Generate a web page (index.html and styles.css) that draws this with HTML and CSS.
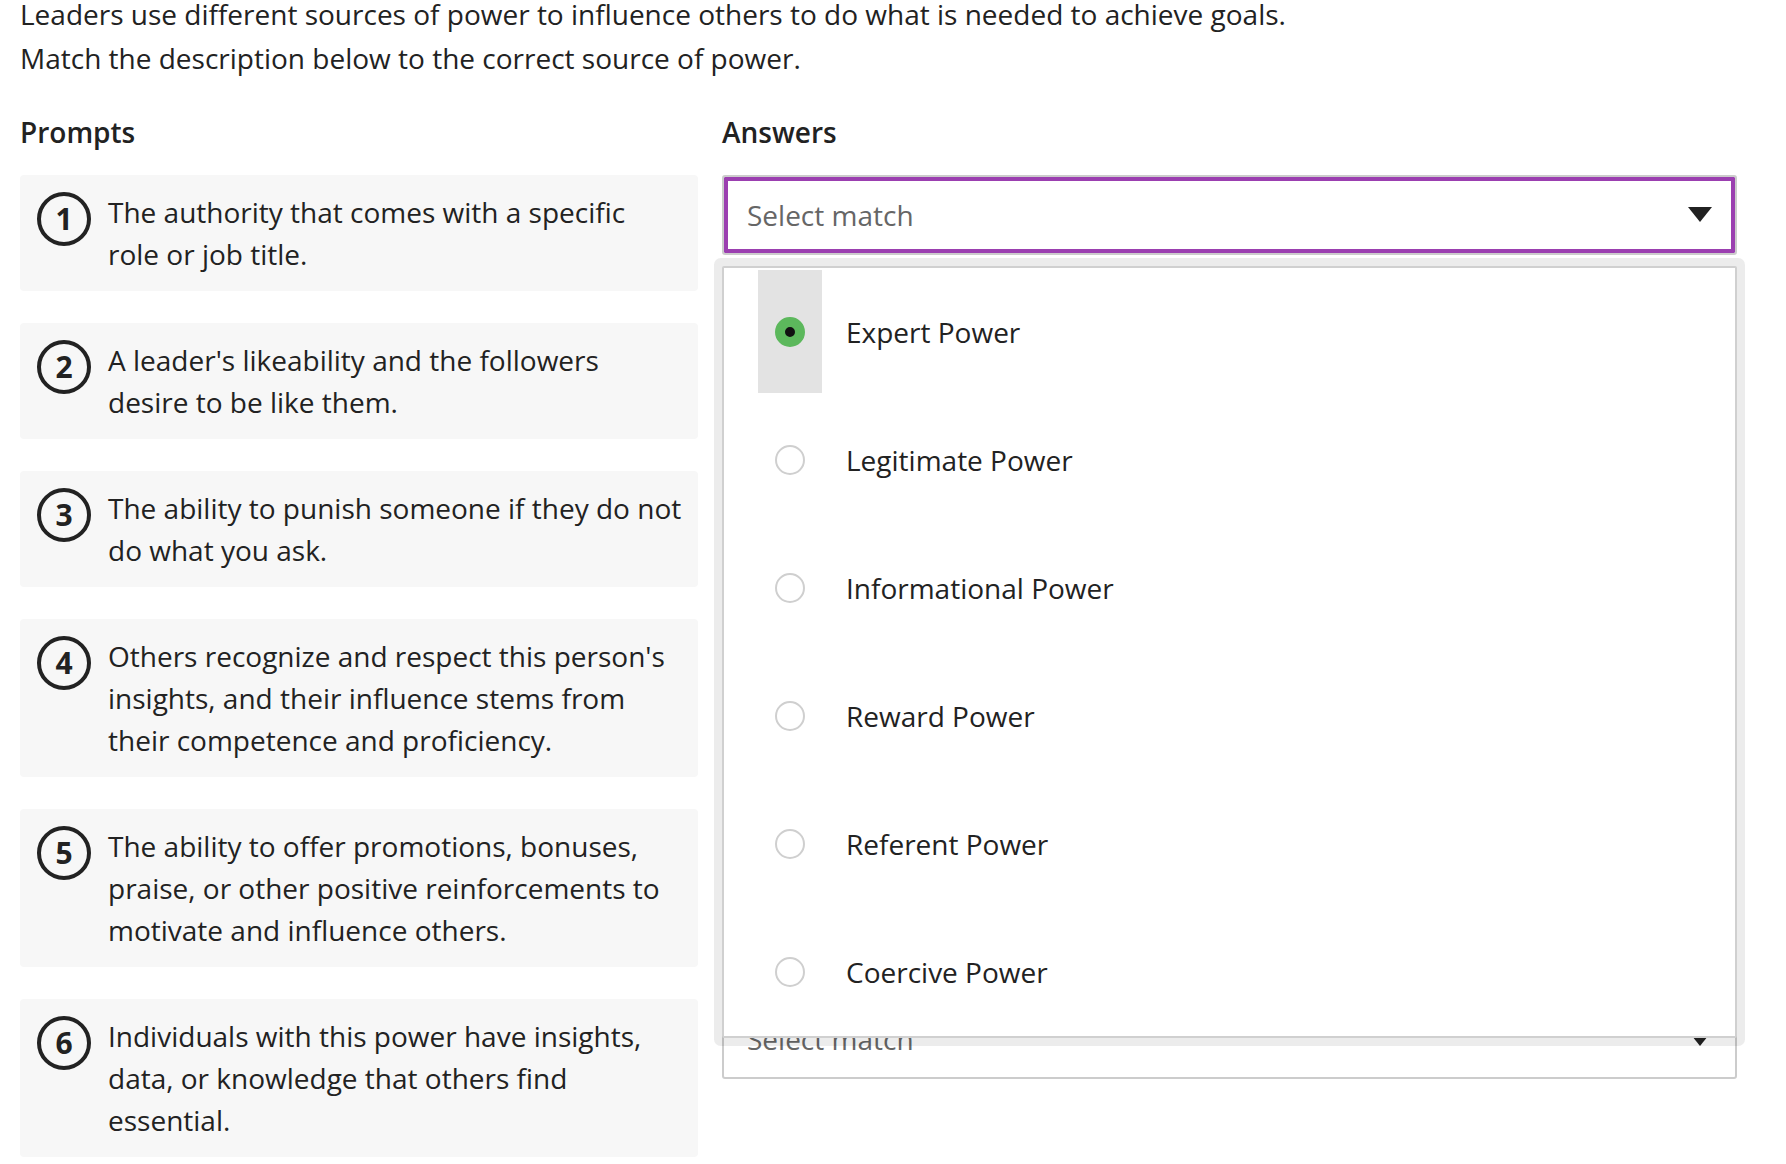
FILE: index.html
```html
<!DOCTYPE html>
<html lang="en">
<head>
<meta charset="utf-8">
<title>Match sources of power</title>
<link rel="stylesheet" href="styles.css">
</head>
<body>
<main class="page">
  <div class="intro">
    <p>Leaders use different sources of power to influence others to do what is needed to achieve goals.</p>
    <p>Match the description below to the correct source of power.</p>
  </div>

  <div class="heads">
    <h2 class="head head-prompts">Prompts</h2>
    <h2 class="head head-answers">Answers</h2>
  </div>

  <div class="rows">
    <div class="card"><span class="num">1</span><p class="card-text">The authority that comes with a specific role or job title.</p></div>
    <div class="answer">
      <div class="select is-focused"><span class="placeholder">Select match</span><span class="caret"></span></div>
      <ul class="menu">
        <li class="option is-selected"><span class="radio-col"><span class="radio"></span></span><span class="option-text">Expert Power</span></li>
        <li class="option"><span class="radio-col"><span class="radio"></span></span><span class="option-text">Legitimate Power</span></li>
        <li class="option"><span class="radio-col"><span class="radio"></span></span><span class="option-text">Informational Power</span></li>
        <li class="option"><span class="radio-col"><span class="radio"></span></span><span class="option-text">Reward Power</span></li>
        <li class="option"><span class="radio-col"><span class="radio"></span></span><span class="option-text">Referent Power</span></li>
        <li class="option"><span class="radio-col"><span class="radio"></span></span><span class="option-text">Coercive Power</span></li>
      </ul>
    </div>

    <div class="card"><span class="num">2</span><p class="card-text">A leader's likeability and the followers desire to be like them.</p></div>
    <div class="answer"><div class="select"><span class="placeholder">Select match</span><span class="caret"></span></div></div>

    <div class="card"><span class="num">3</span><p class="card-text">The ability to punish someone if they do not do what you ask.</p></div>
    <div class="answer"><div class="select"><span class="placeholder">Select match</span><span class="caret"></span></div></div>

    <div class="card"><span class="num">4</span><p class="card-text">Others recognize and respect this person's insights, and their influence stems from their competence and proficiency.</p></div>
    <div class="answer"><div class="select"><span class="placeholder">Select match</span><span class="caret"></span></div></div>

    <div class="card"><span class="num">5</span><p class="card-text">The ability to offer promotions, bonuses, praise, or other positive reinforcements to motivate and influence others.</p></div>
    <div class="answer"><div class="select"><span class="placeholder">Select match</span><span class="caret"></span></div></div>

    <div class="card"><span class="num">6</span><p class="card-text">Individuals with this power have insights, data, or knowledge that others find essential.</p></div>
    <div class="answer"><div class="select"><span class="placeholder">Select match</span><span class="caret"></span></div></div>
  </div>
</main>
</body>
</html>
```

FILE: styles.css
```css
html, body {
  margin: 0;
  padding: 0;
  background: #ffffff;
}

body {
  font-family: "Open Sans", "Noto Sans", sans-serif;
  color: #222222;
  overflow: hidden;
}

.page {
  padding: 0 20px;
  margin-top: -8px;
}

.intro p {
  margin: 0;
  font-size: 28px;
  line-height: 44px;
}

.heads {
  display: grid;
  grid-template-columns: 678px 1015px;
  column-gap: 24px;
  margin-top: 33.8px;
  margin-bottom: 25.2px;
}

.head {
  margin: 0;
  font-size: 28px;
  line-height: 36px;
  font-weight: 600;
}

.rows {
  display: grid;
  grid-template-columns: 678px 1015px;
  column-gap: 24px;
  row-gap: 32px;
  align-items: start;
}

.card {
  display: flex;
  align-items: flex-start;
  gap: 17px;
  background: #f7f7f7;
  border-radius: 4px;
  padding: 16px 16px 16px 17px;
  align-self: stretch;
}

.num {
  flex: 0 0 auto;
  box-sizing: border-box;
  width: 54px;
  height: 54px;
  margin-top: 1px;
  border: 4px solid #222222;
  border-radius: 50%;
  display: flex;
  align-items: center;
  justify-content: center;
  font-size: 30px;
  font-weight: 700;
  line-height: 1;
}

.card-text {
  margin: 0;
  font-size: 28px;
  line-height: 42px;
}

.answer {
  position: relative;
}

.select {
  box-sizing: border-box;
  height: 80px;
  border: 2px solid #cccccc;
  border-radius: 3px;
  background: #ffffff;
  display: flex;
  align-items: center;
  justify-content: space-between;
  padding: 0 23px 0 23px;
}

.select.is-focused {
  box-shadow: inset 0 0 0 4px #9b3fb0;
}

.placeholder {
  font-size: 28px;
  color: #666666;
  line-height: 42px;
}

.caret {
  width: 0;
  height: 0;
  border-left: 12px solid transparent;
  border-right: 12px solid transparent;
  border-top: 15px solid #222222;
  margin-top: -1px;
}

.menu {
  position: absolute;
  z-index: 10;
  top: 91px;
  left: 0;
  right: 0;
  margin: 0;
  padding: 0;
  list-style: none;
  background: #ffffff;
  border: 2px solid #d0d0d0;
  border-radius: 2px;
  box-shadow: 0 0 0 8px rgba(0, 0, 0, 0.075);
}

.option {
  display: flex;
  align-items: center;
  height: 128px;
  padding-left: 34px;
}

.radio-col {
  flex: 0 0 auto;
  width: 64px;
  height: 123px;
  display: flex;
  align-items: center;
  justify-content: center;
}

.option.is-selected .radio-col {
  background: #e3e3e3;
}

.radio {
  box-sizing: border-box;
  width: 30px;
  height: 30px;
  border-radius: 50%;
  border: 2px solid #cfcfcf;
  background: #ffffff;
}

.option.is-selected .radio {
  border: 10px solid #5cb85c;
  background: #111111;
}

.option-text {
  margin-left: 24px;
  font-size: 28px;
  line-height: 42px;
  color: #222222;
}
```
